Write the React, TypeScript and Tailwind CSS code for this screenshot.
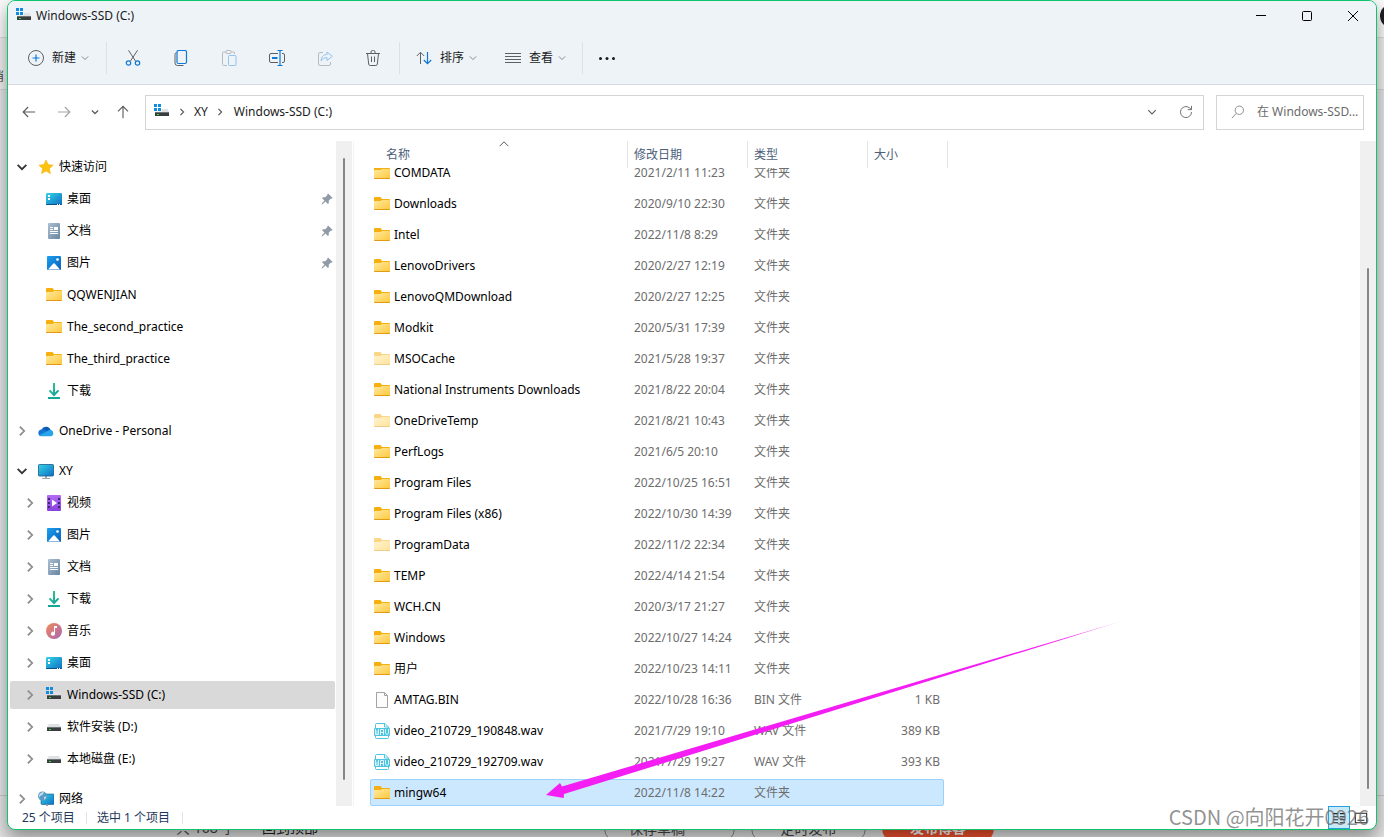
import type { ReactNode } from "react";

type FileRow = {
  name: string;
  date: string;
  type: string;
  size?: string;
  icon: "folder" | "hidden" | "blank" | "wav";
  selected?: boolean;
};

type TreeItem = {
  id: string;
  label: string;
  icon: ReactNode;
  level: 0 | 1;
  arrow?: "open" | "closed";
  pinned?: boolean;
  selected?: boolean;
  gap?: boolean;
};

const files: FileRow[] = [
  { name: "COMDATA", date: "2021/2/11 11:23", type: "文件夹", icon: "folder" },
  { name: "Downloads", date: "2020/9/10 22:30", type: "文件夹", icon: "folder" },
  { name: "Intel", date: "2022/11/8 8:29", type: "文件夹", icon: "folder" },
  { name: "LenovoDrivers", date: "2020/2/27 12:19", type: "文件夹", icon: "folder" },
  { name: "LenovoQMDownload", date: "2020/2/27 12:25", type: "文件夹", icon: "folder" },
  { name: "Modkit", date: "2020/5/31 17:39", type: "文件夹", icon: "folder" },
  { name: "MSOCache", date: "2021/5/28 19:37", type: "文件夹", icon: "hidden" },
  { name: "National Instruments Downloads", date: "2021/8/22 20:04", type: "文件夹", icon: "folder" },
  { name: "OneDriveTemp", date: "2021/8/21 10:43", type: "文件夹", icon: "hidden" },
  { name: "PerfLogs", date: "2021/6/5 20:10", type: "文件夹", icon: "folder" },
  { name: "Program Files", date: "2022/10/25 16:51", type: "文件夹", icon: "folder" },
  { name: "Program Files (x86)", date: "2022/10/30 14:39", type: "文件夹", icon: "folder" },
  { name: "ProgramData", date: "2022/11/2 22:34", type: "文件夹", icon: "hidden" },
  { name: "TEMP", date: "2022/4/14 21:54", type: "文件夹", icon: "folder" },
  { name: "WCH.CN", date: "2020/3/17 21:27", type: "文件夹", icon: "folder" },
  { name: "Windows", date: "2022/10/27 14:24", type: "文件夹", icon: "folder" },
  { name: "用户", date: "2022/10/23 14:11", type: "文件夹", icon: "folder" },
  { name: "AMTAG.BIN", date: "2022/10/28 16:36", type: "BIN 文件", size: "1 KB", icon: "blank" },
  { name: "video_210729_190848.wav", date: "2021/7/29 19:10", type: "WAV 文件", size: "389 KB", icon: "wav" },
  { name: "video_210729_192709.wav", date: "2021/7/29 19:27", type: "WAV 文件", size: "393 KB", icon: "wav" },
  { name: "mingw64", date: "2022/11/8 14:22", type: "文件夹", icon: "folder", selected: true },
];

function Icon({ children, className = "size-4" }: { children: ReactNode; className?: string }) {
  return (
    <svg viewBox="0 0 16 16" fill="none" className={`shrink-0 ${className}`} aria-hidden="true">
      {children}
    </svg>
  );
}

// Gradients are shared by every icon on the page.
function Gradients() {
  return (
    <svg className="absolute size-0" aria-hidden="true">
      <defs>
        <linearGradient id="gFolder" x1="0" y1="0" x2="1" y2="1">
          <stop offset="0" stopColor="#ffe9a0" />
          <stop offset="1" stopColor="#ffc83a" />
        </linearGradient>
        <linearGradient id="gScreen" x1="0" y1="0" x2="1" y2="1">
          <stop offset="0" stopColor="#35d3e6" />
          <stop offset="1" stopColor="#0d6fc4" />
        </linearGradient>
        <linearGradient id="gDoc" x1="0" y1="0" x2="1" y2="1">
          <stop offset="0" stopColor="#aebfd0" />
          <stop offset="1" stopColor="#6685a3" />
        </linearGradient>
        <linearGradient id="gPicture" x1="0" y1="0" x2="1" y2="1">
          <stop offset="0" stopColor="#1d9ff0" />
          <stop offset="1" stopColor="#0861b8" />
        </linearGradient>
        <linearGradient id="gVideo" x1="0" y1="0" x2="0" y2="1">
          <stop offset="0" stopColor="#b36cf2" />
          <stop offset="1" stopColor="#8741dd" />
        </linearGradient>
        <linearGradient id="gMusic" x1="0" y1="0" x2="1" y2="1">
          <stop offset="0" stopColor="#f58a56" />
          <stop offset="1" stopColor="#a765b8" />
        </linearGradient>
        <linearGradient id="gDown" x1="0" y1="0" x2="1" y2="1">
          <stop offset="0" stopColor="#3ac88f" />
          <stop offset="1" stopColor="#0d9c9c" />
        </linearGradient>
      </defs>
    </svg>
  );
}

function Folder({ faded = false }: { faded?: boolean }) {
  return (
    <Icon className={faded ? "size-4 opacity-50" : "size-4"}>
      <path d="M0 2a1 1 0 0 1 1-1h5.500l1.500 2h7a1 1 0 0 1 1 1v4H0Z" fill="#f5b00f" />
      <path d="M0 6a1 1 0 0 1 1-1h5.500l1.500-1H15a1 1 0 0 1 1 1V13a1 1 0 0 1-1 1H1a1 1 0 0 1-1-1Z" fill="url(#gFolder)" />
      <path d="M0 12.500V13a1 1 0 0 0 1 1h14a1 1 0 0 0 1-1v-.5a1 1 0 0 1-1 .6H1a1 1 0 0 1-1-.6Z" fill="#e39b17" />
    </Icon>
  );
}

function SystemDrive() {
  return (
    <Icon>
      <path d="M0 0h3v3H0ZM4 0h3v3H4ZM0 4h3v3H0ZM4 4h3v3H4Z" fill="#0f8be0" />
      <path d="M8 5h5.500L15 8H1.500L2 7.500h6Z" fill="#dfe1e3" />
      <path d="M1 8h14v4H1Z" fill="#3a3d3f" />
      <path d="M1 8h14v1H1Z" fill="#6e7173" />
      <path d="M3 10h2v1H3Z" fill="#2fe02f" />
    </Icon>
  );
}

function Drive() {
  return (
    <Icon>
      <path d="M3 5h10l2 3H1Z" fill="#dfe1e3" />
      <path d="M1 8h14v4H1Z" fill="#3a3d3f" />
      <path d="M1 8h14v1H1Z" fill="#6e7173" />
      <path d="M3 10h2v1H3Z" fill="#2fe02f" />
    </Icon>
  );
}

function Star() {
  return (
    <Icon>
      <path
        d="m8 1 2.100 4.600 5 .6-3.700 3.400 1 5L8 12.100 3.600 14.600l1-5L.9 6.200l5-.6Z"
        fill="#fdc20f"
        stroke="#f7b10a"
        strokeWidth=".6"
        strokeLinejoin="round"
      />
    </Icon>
  );
}

function Desktop() {
  return (
    <Icon>
      <rect y="2" width="16" height="12" rx="1" fill="url(#gScreen)" />
      <path d="M0 13h16a1 1 0 0 1-1 1H1a1 1 0 0 1-1-1Z" fill="#0c4f86" />
      <path d="M2 4h2v2H2ZM2 7h2v2H2ZM11 13h1v1h-1ZM13 13h1v1h-1Z" fill="#fff" />
    </Icon>
  );
}

function Document() {
  return (
    <Icon>
      <rect x="2" width="12" height="16" rx="1" fill="url(#gDoc)" />
      <path d="M4 4.500h3M4 6.500h3M4 8.500h8M4 10.500h8" stroke="#fff" />
      <path d="M8 4h4v3H8Z" fill="#fff" />
    </Icon>
  );
}

function Picture() {
  return (
    <Icon>
      <rect x="1" y="1" width="14" height="14" rx="1" fill="url(#gPicture)" />
      <path d="m2 14.500 5.300-6a1 1 0 0 1 1.400 0l5.300 6Z" fill="#fff" />
      <circle cx="11.500" cy="4.500" r="1.300" fill="#fff" />
    </Icon>
  );
}

function Download() {
  return (
    <Icon>
      <path d="M7 0h2v9.500L11.800 6.700l1.400 1.400L8 13.400 2.800 8.100l1.400-1.400L7 9.500Z" fill="url(#gDown)" />
      <path d="M2 14h12v2H2Z" fill="#17a795" />
    </Icon>
  );
}

function OneDrive() {
  return (
    <Icon>
      <path d="M3.500 6.500A5 5 0 0 1 12.700 7L8 10Z" fill="#0a5cb5" />
      <path d="M3.500 6.500c1.500-.4 2.700 0 3.800.8l3.500 2.200L3 13.200A3.400 3.400 0 0 1 3.500 6.500Z" fill="#1374d4" />
      <path d="M12.300 7a3.200 3.200 0 0 1 .5 6.300H3.500c-1 0-1.700-.4-2.300-1L9 8.300c1-.8 2-1.300 3.300-1.300Z" fill="#28a4ea" />
    </Icon>
  );
}

function Monitor() {
  return (
    <Icon>
      <path d="M7 13h2v2H7ZM4 15h8v1H4Z" fill="#9aa5ae" />
      <rect x=".5" y="1.500" width="15" height="11.500" rx=".8" fill="url(#gScreen)" stroke="#1a5b86" strokeWidth=".8" />
    </Icon>
  );
}

function Video() {
  return (
    <Icon>
      <rect x="1" width="14" height="16" rx="1" fill="url(#gVideo)" />
      <path d="M2 3h2v2H2ZM2 7h2v2H2ZM2 11h2v2H2ZM12 3h2v2h-2ZM12 7h2v2h-2ZM12 11h2v2h-2Z" fill="#3f2478" />
      <path d="m6 4.500 5 3.500-5 3.500Z" fill="#fff" />
    </Icon>
  );
}

function Music() {
  return (
    <Icon>
      <circle cx="8" cy="8" r="8" fill="url(#gMusic)" />
      <path d="M8 3h3v2H9v5.500A2 2 0 1 1 8 9Z" fill="#fff" />
    </Icon>
  );
}

function Network() {
  return (
    <Icon>
      <rect x="3" y="3" width="13" height="10.500" rx=".8" fill="url(#gScreen)" stroke="#1a5b86" strokeWidth=".6" />
      <path d="M8 13.500h2V15H8ZM6 15h6v1H6Z" fill="#9aa5ae" />
      <circle cx="4.500" cy="5" r="4.500" fill="#5b9cc4" />
      <path d="M1 4c1-2 3-3 5-3-1 2-1 3-3 3.500S2 7 1 6Zm5 2c1-1 2-.5 2.500 0L6.500 9Z" fill="#c4dfee" />
    </Icon>
  );
}

function BlankFile() {
  return (
    <Icon>
      <path d="M2.500.5h8l3 3v12h-11Z" fill="#fcfcfc" stroke="#a3a3a3" />
      <path d="M10.500.5v3h3" stroke="#a3a3a3" />
    </Icon>
  );
}

function WavFile() {
  return (
    <Icon>
      <path d="M1.500 5V1.500a1 1 0 0 1 1-1H11l3.500 3.500v1M1.500 13v1.500a1 1 0 0 0 1 1h11a1 1 0 0 0 1-1V13M10.500.5v3.500H14" stroke="#4fc4e0" />
      <rect x="0" y="5" width="16" height="8" rx="1" fill="#4fc4e0" />
      <path d="M1.500 6v5.500h3V6M3 7.500v4M6.500 12V6.500h3V12M6.500 9.500h3M11.500 6v4l1 1.500h1l1-1.500V6" stroke="#fff" strokeWidth=".8" />
    </Icon>
  );
}

function Pin() {
  return (
    <Icon className="size-3">
      <path d="m9.500.5 6 6-1.200 1.200-1-.3-3 3 .2 3-1.300 1.100L6 11.300l-4.500 4L.6 14.500l4-4.600-3.200-3L2.600 5.600l3 .2 3-3-.3-1Z" fill="#8f9ba5" />
    </Icon>
  );
}

function Chevron({ dir, className }: { dir: "down" | "right" | "up"; className: string }) {
  const paths = {
    down: "m3 5.500 5 5 5-5",
    right: "m5.500 3 5 5-5 5",
    up: "m3 10.500 5-5 5 5",
  };
  return (
    <svg viewBox="0 0 16 16" fill="none" stroke="currentColor" className={`shrink-0 ${className}`} aria-hidden="true">
      <path d={paths[dir]} />
    </svg>
  );
}

const tree: TreeItem[] = [
  { id: "quick", label: "快速访问", icon: <Star />, level: 0, arrow: "open" },
  { id: "q-desktop", label: "桌面", icon: <Desktop />, level: 1, pinned: true },
  { id: "q-docs", label: "文档", icon: <Document />, level: 1, pinned: true },
  { id: "q-pics", label: "图片", icon: <Picture />, level: 1, pinned: true },
  { id: "q-qq", label: "QQWENJIAN", icon: <Folder />, level: 1 },
  { id: "q-second", label: "The_second_practice", icon: <Folder />, level: 1 },
  { id: "q-third", label: "The_third_practice", icon: <Folder />, level: 1 },
  { id: "q-down", label: "下载", icon: <Download />, level: 1 },
  { id: "onedrive", label: "OneDrive - Personal", icon: <OneDrive />, level: 0, arrow: "closed", gap: true },
  { id: "xy", label: "XY", icon: <Monitor />, level: 0, arrow: "open", gap: true },
  { id: "video", label: "视频", icon: <Video />, level: 1, arrow: "closed" },
  { id: "pics", label: "图片", icon: <Picture />, level: 1, arrow: "closed" },
  { id: "docs", label: "文档", icon: <Document />, level: 1, arrow: "closed" },
  { id: "down", label: "下载", icon: <Download />, level: 1, arrow: "closed" },
  { id: "music", label: "音乐", icon: <Music />, level: 1, arrow: "closed" },
  { id: "desktop", label: "桌面", icon: <Desktop />, level: 1, arrow: "closed" },
  { id: "c", label: "Windows-SSD (C:)", icon: <SystemDrive />, level: 1, arrow: "closed", selected: true },
  { id: "d", label: "软件安装 (D:)", icon: <Drive />, level: 1, arrow: "closed" },
  { id: "e", label: "本地磁盘 (E:)", icon: <Drive />, level: 1, arrow: "closed" },
  { id: "network", label: "网络", icon: <Network />, level: 0, arrow: "closed", gap: true },
];

// The blog editor that shows round the edges of the explorer window.
function EditorBehind() {
  return (
    <div className="absolute inset-0 flex flex-col overflow-hidden bg-[#e4e5e8] text-sm text-[#444]" aria-hidden="true">
      <div className="flex h-[38px] shrink-0 justify-end border-b border-[#dcdcdc] bg-[#fafafa]">
        <span className="-mr-5 mt-1 size-6 rounded-full bg-[#1c1f22]" />
      </div>
      <div className="flex h-[52px] shrink-0 items-end border-b border-[#d4d4d4] bg-[#efefef]">
        <span className="-ml-2 pb-1 text-xs">消</span>
      </div>
      <div className="flex-1" />
      <div className="flex h-[42px] shrink-0 items-start border-t border-[#c8c8c8] bg-[#e4e4e4] pl-44 pt-4 leading-8">
        <span className="w-[86px]">共 168 字</span>
        <span className="w-[342px] text-[#222]">回到顶部 ^</span>
        <div className="flex gap-4">
          <span className="h-8 w-[131px] rounded-full border border-[#888] pl-6">保存草稿</span>
          <span className="h-8 w-[115px] rounded-full border border-[#888] text-center">定时发布</span>
          <span className="h-8 w-[112px] rounded-full bg-[#f0502e] text-center font-bold text-white">发布博客</span>
        </div>
      </div>
    </div>
  );
}

function TitleBar() {
  return (
    <div className="flex h-[30px] shrink-0 items-center pl-2">
      <SystemDrive />
      <h1 className="ml-1 flex-1">Windows-SSD (C:)</h1>
      <button aria-label="最小化" className="flex h-full w-[46px] items-center justify-center">
        <svg viewBox="0 0 10 10" className="size-2.5" stroke="#000"><path d="M0 4.500h10" /></svg>
      </button>
      <button aria-label="最大化" className="flex h-full w-[46px] items-center justify-center">
        <svg viewBox="0 0 10 10" className="size-2.5" stroke="#000" fill="none"><rect x=".5" y=".5" width="9" height="9" rx="1" /></svg>
      </button>
      <button aria-label="关闭" className="flex h-full w-[46px] items-center justify-center">
        <svg viewBox="0 0 10 10" className="size-2.5" stroke="#000"><path d="m0 0 10 10M10 0 0 10" /></svg>
      </button>
    </div>
  );
}

function ToolButton({ label, disabled, children }: { label: string; disabled?: boolean; children: ReactNode }) {
  return (
    <button aria-label={label} disabled={disabled} className="flex h-8 w-12 items-center justify-center">
      {children}
    </button>
  );
}

function Separator() {
  return <span className="h-8 w-px bg-[#dde1e6]" />;
}

function Toolbar() {
  return (
    <div className="flex h-[54px] shrink-0 items-center border-b border-[#d6dbe1]">
      <button className="flex items-center pl-5 pr-4">
        <Icon>
          <circle cx="8" cy="8" r="7.500" stroke="#5d6063" />
          <path d="M8 4.500v7M4.500 8h7" stroke="#0f78d4" strokeWidth="1.200" />
        </Icon>
        <span className="ml-2 mr-1">新建</span>
        <Chevron dir="down" className="size-2.5 stroke-[1.5] text-[#7d8083]" />
      </button>
      <Separator />
      <div className="mx-0.5 flex">
        <ToolButton label="剪切">
          <Icon>
            <path d="M3.500.3 10.500 11M12.500.3 5.500 11" stroke="#5d6063" />
            <circle cx="3.500" cy="13" r="2.200" stroke="#0f78d4" strokeWidth="1.200" />
            <circle cx="12.500" cy="13" r="2.200" stroke="#0f78d4" strokeWidth="1.200" />
          </Icon>
        </ToolButton>
        <ToolButton label="复制">
          <Icon>
            <path d="M3.500 2.500a2 2 0 0 0-1.500 2V13A2.500 2.500 0 0 0 4.500 15.500h6" stroke="#5d6063" />
            <rect x="4" y=".5" width="9.500" height="13" rx="1.500" stroke="#0f78d4" strokeWidth="1.200" />
          </Icon>
        </ToolButton>
        <ToolButton label="粘贴" disabled>
          <Icon>
            <path d="M6 15.500H2.500a1 1 0 0 1-1-1V3a1 1 0 0 1 1-1H5M10 2h2.500a1 1 0 0 1 1 1v1" stroke="#b7bbbf" />
            <rect x="5" y=".5" width="5" height="3" rx="1" stroke="#b7bbbf" />
            <rect x="7.500" y="5.500" width="7.500" height="10" rx="1" stroke="#93c2ea" />
          </Icon>
        </ToolButton>
        <ToolButton label="重命名">
          <Icon>
            <path d="M9 3.500H2A1.500 1.500 0 0 0 .5 5v6A1.500 1.500 0 0 0 2 12.500h7M13 3.500h1A1.500 1.500 0 0 1 15.500 5v6a1.500 1.500 0 0 1-1.500 1.500h-1" stroke="#5d6063" />
            <path d="M8.500.5h5M8.500 15.500h5M11 .5v15" stroke="#0f78d4" strokeWidth="1.200" />
            <path d="M3 8h5.500" stroke="#0f78d4" strokeWidth="1.800" />
          </Icon>
        </ToolButton>
        <ToolButton label="共享" disabled>
          <Icon>
            <path d="M6 2.500H3A1.500 1.500 0 0 0 1.500 4v10A1.500 1.500 0 0 0 3 15.500h9a1.500 1.500 0 0 0 1.500-1.500v-2" stroke="#b7bbbf" />
            <path d="M10 2v2.500c-4 0-5.500 2.500-6 6.500 1.500-2.500 3-3.300 6-3.300V10.500l5.300-4.200Z" stroke="#93c2ea" strokeLinejoin="round" />
          </Icon>
        </ToolButton>
        <ToolButton label="删除">
          <Icon>
            <path d="M1 3.500h14M6 3.500V2a1.500 1.500 0 0 1 1.500-1.500h1A1.500 1.500 0 0 1 10 2v1.500M2.500 3.500l1.200 10.700A1.500 1.500 0 0 0 5.200 15.500h5.600a1.500 1.500 0 0 0 1.500-1.300l1.200-10.700M6.500 6.500v5.500M9.500 6.500v5.500" stroke="#5d6063" />
          </Icon>
        </ToolButton>
      </div>
      <Separator />
      <button className="flex items-center pl-4 pr-[13px]">
        <Icon>
          <path d="M4.500 14V2.500M.8 6l3.700-3.700L8.200 6" stroke="#5d6063" />
          <path d="M11.500 2v11.500M7.800 10l3.700 3.700 3.700-3.700" stroke="#0f78d4" strokeWidth="1.200" />
        </Icon>
        <span className="ml-2 mr-1">排序</span>
        <Chevron dir="down" className="size-2.5 stroke-[1.5] text-[#7d8083]" />
      </button>
      <button className="flex items-center pl-[14px] pr-[15px]">
        <Icon>
          <path d="M0 3.500h16M0 6.500h16M0 9.500h16M0 12.500h16" stroke="#5d6063" />
        </Icon>
        <span className="ml-2 mr-1">查看</span>
        <Chevron dir="down" className="size-2.5 stroke-[1.5] text-[#7d8083]" />
      </button>
      <Separator />
      <ToolButton label="查看更多">
        <Icon>
          <circle cx="1.500" cy="8.500" r="1.500" fill="#1b1b1b" />
          <circle cx="8" cy="8.500" r="1.500" fill="#1b1b1b" />
          <circle cx="14.500" cy="8.500" r="1.500" fill="#1b1b1b" />
        </Icon>
      </ToolButton>
    </div>
  );
}

function AddressBar() {
  return (
    <div className="mb-0.5 flex h-[54px] shrink-0 items-center pl-[3px] pr-3">
      <button aria-label="后退" className="flex h-8 w-9 items-center justify-center">
        <Icon className="size-3.5"><path d="M15 8H1.500M7 2.300 1.300 8 7 13.700" stroke="#5d5d5d" strokeWidth="1.300" /></Icon>
      </button>
      <button aria-label="前进" disabled className="flex h-8 w-[34px] items-center justify-center">
        <Icon className="size-3.5"><path d="M1 8h13.500M9 2.300 14.700 8 9 13.700" stroke="#a3a3a3" strokeWidth="1.300" /></Icon>
      </button>
      <button aria-label="最近浏览的位置" className="flex h-8 w-[27px] items-center justify-center text-[#5d5d5d]">
        <Chevron dir="down" className="size-2.5 stroke-2" />
      </button>
      <button aria-label="上移" className="flex h-8 w-[30px] items-center justify-center">
        <Icon className="size-3.5"><path d="M8 15V1.500M2.300 7.300 8 1.500l5.700 5.800" stroke="#5d5d5d" strokeWidth="1.300" /></Icon>
      </button>
      <nav className="ml-[7px] flex h-[35px] flex-1 items-center border border-[#d5d5d5] bg-white pl-2">
        <SystemDrive />
        <span className="flex w-6 justify-center"><Chevron dir="right" className="size-2.5 stroke-2 text-[#5d5d5d]" /></span>
        <a href="#xy">XY</a>
        <span className="flex w-6 justify-center"><Chevron dir="right" className="size-2.5 stroke-2 text-[#5d5d5d]" /></span>
        <a href="#c" className="ml-0.5 flex-1">Windows-SSD (C:)</a>
        <button aria-label="以前的位置" className="flex h-full w-[34px] items-center justify-center">
          <Chevron dir="down" className="size-3 stroke-[1.5] text-[#5d5d5d]" />
        </button>
        <button aria-label="刷新" className="flex h-full w-[34px] items-center justify-center">
          <Icon className="size-3.5">
            <path d="M14.300 8A6.300 6.300 0 1 1 12 3.200l2 1.800M14.300 1v4.300H10" stroke="#6e6e6e" strokeWidth="1.100" />
          </Icon>
        </button>
      </nav>
      <label className="ml-3 flex h-[35px] w-[148px] items-center border border-[#d5d5d5] bg-white pl-3.5">
        <Icon className="size-3.5">
          <circle cx="9.500" cy="6" r="4.800" stroke="#8a8a8a" strokeWidth="1.100" />
          <path d="M6 9.500 1 15" stroke="#8a8a8a" strokeWidth="1.100" />
        </Icon>
        <input
          type="text"
          aria-label="搜索"
          placeholder="在 Windows-SSD..."
          className="ml-3 w-full min-w-0 flex-1 bg-transparent outline-none placeholder:text-[#6b6b6b]"
        />
      </label>
    </div>
  );
}

function Sidebar() {
  return (
    <aside className="flex w-[344px] shrink-0 text-black">
      <ul className="min-w-0 flex-1 overflow-hidden pl-0.5 pr-px pt-2.5">
        {tree.map((item) => (
          <li key={item.id} className={item.gap ? "mt-2 py-0.5" : "py-0.5"}>
            <button
              className={`flex h-7 w-full items-center rounded-xs text-left ${item.level === 1 ? "pl-2" : ""} ${item.selected ? "bg-[#d9d9d9]" : ""}`}
            >
              <span className="mr-1 flex w-6 justify-center">
                {item.arrow === "open" && <Chevron dir="down" className="size-3.5 stroke-2 text-[#333]" />}
                {item.arrow === "closed" && <Chevron dir="right" className="size-3.5 stroke-2 text-[#8c8c8c]" />}
              </span>
              {item.icon}
              <span className="ml-[5px] flex-1">{item.label}</span>
              {item.pinned && <span className="mr-0.5"><Pin /></span>}
            </button>
          </li>
        ))}
      </ul>
      <div className="flex w-4 justify-center bg-[#f0f0f0] pb-[26px] pt-[17px]">
        <span className="w-0.5 rounded-full bg-[#858585]" />
      </div>
    </aside>
  );
}

function FileIcon({ icon }: { icon: FileRow["icon"] }) {
  if (icon === "blank") return <BlankFile />;
  if (icon === "wav") return <WavFile />;
  return <Folder faded={icon === "hidden"} />;
}

function FileList() {
  return (
    <div className="ml-px flex min-w-0 flex-1 border-l border-[#f3f3f3]">
      <table className="flex min-h-0 min-w-0 flex-1 flex-col pl-4">
        <thead className="block shrink-0 text-[#4c607a]">
          <tr className="flex h-[27px] text-left">
            <th className="relative w-[258px] border-r border-[#e5e5e5] pl-4 pt-1 font-normal leading-5">
              名称
              <Chevron dir="up" className="absolute -top-1 left-[127px] size-3.5 text-[#444]" />
            </th>
            <th className="w-[120px] border-r border-[#e5e5e5] pl-1.5 pt-1 font-normal leading-5">修改日期</th>
            <th className="w-[120px] border-r border-[#e5e5e5] pl-1.5 pt-1 font-normal leading-5">类型</th>
            <th className="w-20 border-r border-[#e5e5e5] pl-1.5 pt-1 font-normal leading-5">大小</th>
          </tr>
        </thead>
        <tbody className="flex min-h-0 flex-1 flex-col justify-end gap-1 overflow-hidden text-[#6d6d6d]">
          {files.map((file) => (
            <tr
              key={file.name}
              className={`flex h-[27px] w-[574px] shrink-0 items-center rounded-xs border px-[3px] ${file.selected ? "border-[#99d1ff] bg-[#cce8ff]" : "border-transparent"}`}
            >
              <td className="flex w-[260px] items-center gap-1 text-black">
                <FileIcon icon={file.icon} />
                {file.name}
              </td>
              <td className="w-[120px]">{file.date}</td>
              <td className="w-[120px]">{file.type}</td>
              <td className="w-[66px] text-right">{file.size}</td>
            </tr>
          ))}
        </tbody>
      </table>
      <div className="flex w-4 justify-center bg-[#f0f0f0] pb-[17px] pt-[127px]">
        <span className="w-0.5 rounded-full bg-[#858585]" />
      </div>
    </div>
  );
}

function StatusBar() {
  return (
    <footer className="flex h-[23px] shrink-0 items-center pl-[14px] pr-2 text-[#1e395b]">
      <span className="w-16">25 个项目</span>
      <span className="h-3 w-px bg-[#e3e3e3]" />
      <span className="w-[95px] pl-2.5">选中 1 个项目</span>
      <span className="h-3 w-px bg-[#e3e3e3]" />
      <button aria-label="详细信息" className="ml-auto flex h-[23px] w-[22px] items-center justify-center border border-[#26a0da] bg-[#cbe8f6]">
        <Icon className="size-3.5">
          <path d="M1 3h6M9 3h6M1 6.500h6M9 6.500h6M1 10h6M9 10h6M1 13.500h6M9 13.500h6" stroke="#222" strokeWidth="1.200" />
        </Icon>
      </button>
      <button aria-label="大图标" className="ml-1 flex h-[23px] w-3.5 items-center justify-center">
        <Icon className="size-3.5">
          <path d="M1.500 2.500h13v11h-13ZM4 10.500h8" stroke="#222" strokeWidth="1.200" />
        </Icon>
      </button>
    </footer>
  );
}

function Arrow() {
  return (
    <svg viewBox="0 0 580 180" className="pointer-events-none absolute left-[546px] top-[620px] h-[180px] w-[580px]" aria-hidden="true">
      <defs>
        <linearGradient id="gArrow" x1="0" y1="0" x2="1" y2="0">
          <stop offset="0.9" stopColor="#f41df4" />
          <stop offset="1" stopColor="#f41df4" stopOpacity="0.3" />
        </linearGradient>
      </defs>
      <path d="M0 175 14 163l2 3.500L578 .5 18 174l-.3 4Z" fill="url(#gArrow)" />
    </svg>
  );
}

export default function App() {
  return (
    <div className="relative h-screen overflow-hidden px-[7px] pb-[7px] font-['Noto_Sans','Noto_Sans_CJK_SC',sans-serif] text-xs text-[#1a1a1a]">
      <Gradients />
      <EditorBehind />
      <main className="relative flex h-full flex-col overflow-hidden rounded-lg border border-[#10c46c] bg-white shadow-[0_8px_18px_rgba(0,0,0,0.4)]">
        <header className="shrink-0 bg-[#eef3f8]">
          <TitleBar />
          <Toolbar />
        </header>
        <AddressBar />
        <div className="flex min-h-0 flex-1">
          <Sidebar />
          <FileList />
        </div>
        <StatusBar />
      </main>
      <Arrow />
      <p className="pointer-events-none absolute bottom-1 right-[15px] font-['Noto_Sans_CJK_SC',sans-serif] text-xl leading-8 text-[#6e6e6e]/75">
        CSDN @向阳花开0926
      </p>
    </div>
  );
}
